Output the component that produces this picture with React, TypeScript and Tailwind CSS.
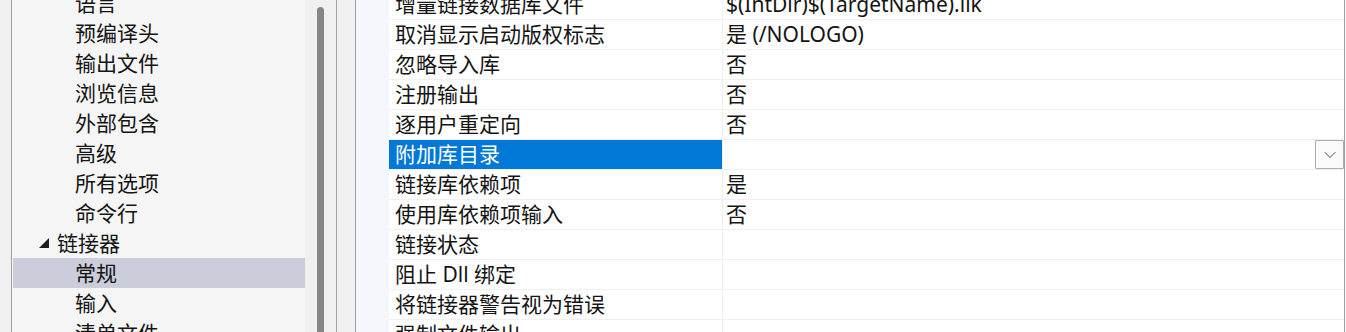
import { ChevronDown } from "lucide-react";

const treeItems: { label: string; level: 1 | 2; expanded?: boolean; selected?: boolean }[] = [
  { label: "语言", level: 2 },
  { label: "预编译头", level: 2 },
  { label: "输出文件", level: 2 },
  { label: "浏览信息", level: 2 },
  { label: "外部包含", level: 2 },
  { label: "高级", level: 2 },
  { label: "所有选项", level: 2 },
  { label: "命令行", level: 2 },
  { label: "链接器", level: 1, expanded: true },
  { label: "常规", level: 2, selected: true },
  { label: "输入", level: 2 },
  { label: "清单文件", level: 2 },
];

const props: { name: string; value: string; selected?: boolean }[] = [
  { name: "增量链接数据库文件", value: "$(IntDir)$(TargetName).ilk" },
  { name: "取消显示启动版权标志", value: "是 (/NOLOGO)" },
  { name: "忽略导入库", value: "否" },
  { name: "注册输出", value: "否" },
  { name: "逐用户重定向", value: "否" },
  { name: "附加库目录", value: "", selected: true },
  { name: "链接库依赖项", value: "是" },
  { name: "使用库依赖项输入", value: "否" },
  { name: "链接状态", value: "" },
  { name: "阻止 Dll 绑定", value: "" },
  { name: "将链接器警告视为错误", value: "" },
  { name: "强制文件输出", value: "" },
];

export default function App() {
  return (
    <div
      className="flex h-[332px] w-[1346px] overflow-hidden bg-[#f0f0f0] text-[21px] leading-none text-[#141414]"
      style={{ fontFamily: '"Noto Sans", "Noto Sans CJK SC", sans-serif' }}
    >
      {/* left tree */}
      <div className="w-[11px] shrink-0" />
      <div className="w-[294px] shrink-0 border-l border-[#a0a0a0] bg-[#f5f5f5] pl-px">
        <div className="-mt-[12px]">
          {treeItems.map((it) => (
            <div
              key={it.label}
              className={`flex h-[30px] items-center ${it.selected ? "bg-[#cbcdda]" : ""}`}
            >
              {it.level === 1 ? (
                <>
                  <span className="ml-[26px] mr-[8px] h-0 w-0 border-b-[10px] border-l-[10px] border-b-[#1e1e1e] border-l-transparent" />
                  <span>{it.label}</span>
                </>
              ) : (
                <span className="ml-[62px]">{it.label}</span>
              )}
            </div>
          ))}
        </div>
      </div>

      {/* scrollbar */}
      <div className="w-[31px] shrink-0 bg-[#f0f0f0] pl-[12px] pt-[7px]">
        <div className="h-full w-[7px] rounded-t-full bg-[#858585]" />
      </div>

      <div className="w-[19px] shrink-0 border-l border-[#a0a0a0] bg-[#f0f0f0]" />

      {/* property grid */}
      <div className="flex flex-1 border-l border-[#a0a0a0] bg-[#f5f7fc] pl-[33px]">
        <div className="w-[956px] border-r border-[#a0a0a0] bg-white">
          <div className="-mt-[10px]">
            {props.map((p) => (
              <div key={p.name} className="flex h-[30px] border-b border-[#f0f0f0]">
                <div
                  className={`flex w-[334px] shrink-0 items-center border-r border-[#f0f0f0] pl-[6px] ${
                    p.selected ? "bg-[#0078d7] text-white" : ""
                  }`}
                >
                  {p.name}
                </div>
                <div className="flex flex-1 items-center pl-[3px]">
                  <span className="flex-1">{p.value}</span>
                  {p.selected && (
                    <span className="flex h-[29px] w-[29px] items-center justify-center rounded-[1px] border border-[#adadad] bg-[#fafafa] text-[#444]">
                      <ChevronDown size={20} strokeWidth={1.1} />
                    </span>
                  )}
                </div>
              </div>
            ))}
          </div>
        </div>
      </div>
    </div>
  );
}
